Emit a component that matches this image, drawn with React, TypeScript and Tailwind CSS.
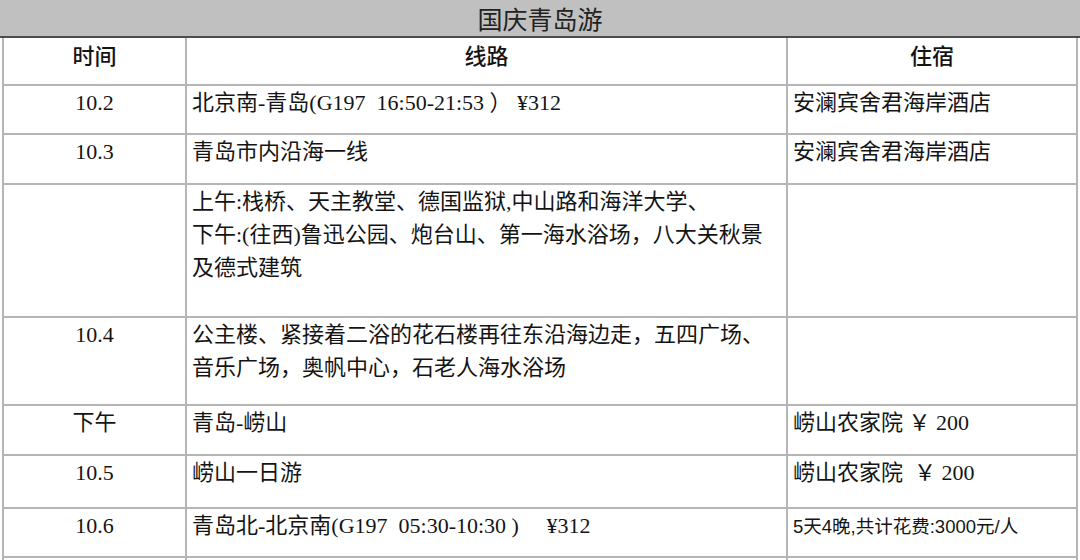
import React from 'react';

type Row = {
  time: string;
  route: React.ReactNode;
  stay?: React.ReactNode;
  h: string;
};

const rows: Row[] = [
  {
    time: '10.2',
    route: '北京南-青岛(G197  16:50-21:53 ） ¥312',
    stay: '安澜宾舍君海岸酒店',
    h: 'h-[49px]',
  },
  {
    time: '10.3',
    route: '青岛市内沿海一线',
    stay: '安澜宾舍君海岸酒店',
    h: 'h-[50px]',
  },
  {
    time: '',
    route: (
      <>
        上午:栈桥、天主教堂、德国监狱,中山路和海洋大学、
        <br />
        下午:(往西)鲁迅公园、炮台山、第一海水浴场，八大关秋景
        <br />
        及德式建筑
      </>
    ),
    h: 'h-[133px]',
  },
  {
    time: '10.4',
    route: (
      <>
        公主楼、紧接着二浴的花石楼再往东沿海边走，五四广场、
        <br />
        音乐广场，奥帆中心，石老人海水浴场
      </>
    ),
    h: 'h-[88px]',
  },
  {
    time: '下午',
    route: '青岛-崂山',
    stay: '崂山农家院 ￥ 200',
    h: 'h-[50px]',
  },
  {
    time: '10.5',
    route: '崂山一日游',
    stay: '崂山农家院  ￥ 200',
    h: 'h-[53px]',
  },
  {
    time: '10.6',
    route: '青岛北-北京南(G197  05:30-10:30 )     ¥312',
    stay: (
      <span className="text-[18.5px] leading-[28px] font-['Liberation_Sans','Noto_Sans_CJK_SC',sans-serif]">
        5天4晚,共计花费:3000元/人
      </span>
    ),
    h: 'h-[49px]',
  },
  {
    time: '',
    route: '',
    h: 'h-[49px]',
  },
];

const cell = 'border-r-2 border-b-2 border-[#b5b5b5] overflow-hidden';

export default function App() {
  return (
    <div className="w-[1080px] h-[560px] overflow-hidden bg-white text-[#141414] font-['Liberation_Serif','Noto_Sans_CJK_SC',serif] text-[22px] leading-[33px]">
      <div className="h-[38px] bg-[#c0c0c0] border-b-2 border-[#4d4d4d] flex items-center justify-center">
        <span className="text-[25px] leading-[30px] text-[#222] font-['Noto_Sans_CJK_SC',sans-serif]">国庆青岛游</span>
      </div>

      <div className="ml-[2px] w-[1078px] border-l-2 border-[#b5b5b5]">
        {/* header */}
        <div className="flex h-[48px]">
          <div className={`${cell} w-[183px] pt-[2px] text-center font-medium`}>时间</div>
          <div className={`${cell} w-[601px] pt-[2px] text-center font-medium`}>线路</div>
          <div className={`${cell} w-[290px] pt-[2px] text-center font-medium`}>住宿</div>
        </div>

        {rows.map((r, i) => (
          <div key={i} className={`flex ${r.h}`}>
            <div className={`${cell} w-[183px] text-center`}>{r.time}</div>
            <div className={`${cell} w-[601px] pl-[5px] whitespace-pre`}>{r.route}</div>
            <div className={`${cell} w-[290px] pl-[5px] whitespace-pre`}>{r.stay}</div>
          </div>
        ))}
      </div>
    </div>
  );
}
